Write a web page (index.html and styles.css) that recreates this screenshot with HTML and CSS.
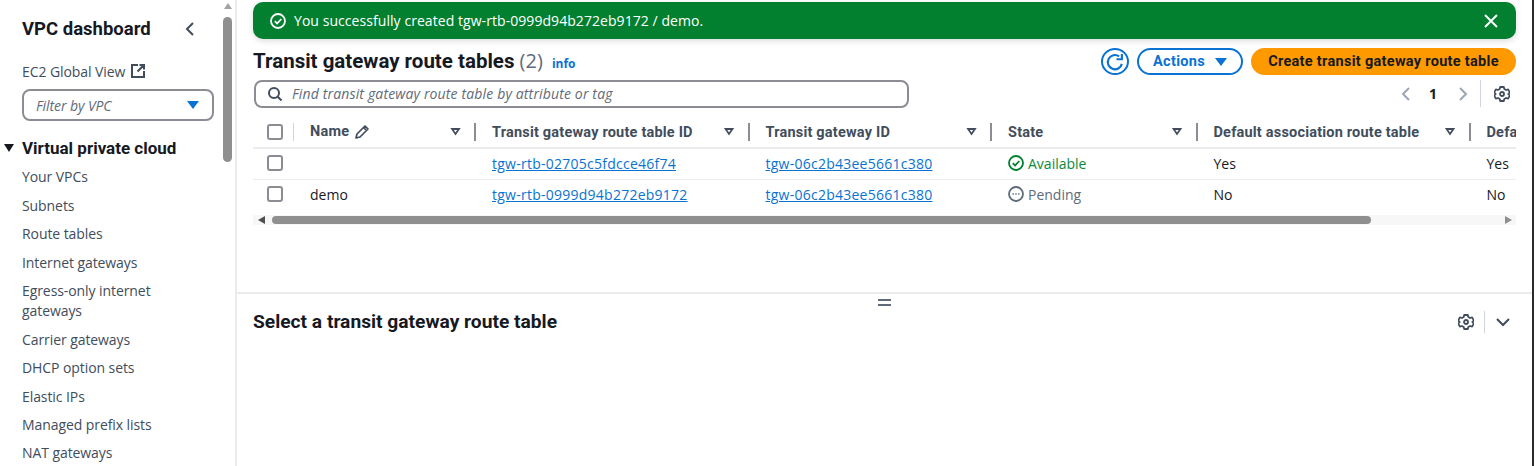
FILE: index.html
```html
<!DOCTYPE html>
<html lang="en">
<head>
<meta charset="utf-8">
<title>Transit gateway route tables</title>
<link rel="stylesheet" href="styles.css">
</head>
<body>
<div class="app">
  <aside class="sidebar">
    <nav class="nav">
      <div class="nav-head">
        <h2 class="nav-title">VPC dashboard</h2>
        <svg class="nav-close" viewBox="0 0 16 16" width="16" height="16"><path d="M11 2 5 8l6 6" fill="none" stroke="#414d5c" stroke-width="2"/></svg>
      </div>
      <a class="nav-global">EC2 Global View
        <svg viewBox="0 0 16 16" width="16" height="16"><path d="M8 2H2v12h12V8M9.500 2H14v4.500M14 2 7.500 8.500" fill="none" stroke="#414d5c" stroke-width="2"/></svg>
      </a>
      <div class="nav-filter"><span>Filter by VPC</span><i class="caret caret-blue"></i></div>
      <div class="nav-section"><i class="caret caret-dark"></i>Virtual private cloud</div>
      <ul class="nav-list">
        <li>Your VPCs</li>
        <li>Subnets</li>
        <li>Route tables</li>
        <li>Internet gateways</li>
        <li>Egress-only internet<br>gateways</li>
        <li>Carrier gateways</li>
        <li>DHCP option sets</li>
        <li>Elastic IPs</li>
        <li>Managed prefix lists</li>
        <li>NAT gateways</li>
      </ul>
    </nav>
    <div class="vscroll">
      <i class="vscroll-up"></i>
      <i class="vscroll-thumb"></i>
    </div>
  </aside>
  <main class="main">
    <section class="top">
      <div class="flash">
        <svg viewBox="0 0 16 16" width="16" height="16"><circle cx="8" cy="8" r="7" fill="none" stroke="#fff" stroke-width="1.800"/><path d="m4.800 8.200 2.300 2.300 4.200-4.500" fill="none" stroke="#fff" stroke-width="1.800"/></svg>
        <span class="flash-text">You successfully created tgw-rtb-0999d94b272eb9172 / demo.</span>
        <svg class="flash-x" viewBox="0 0 16 16" width="16" height="16"><path d="m2 2 12 12M14 2 2 14" fill="none" stroke="#fff" stroke-width="2"/></svg>
      </div>
      <div class="head">
        <h1 class="title">Transit gateway route tables <span class="count">(2)</span> <a class="info">info</a></h1>
        <div class="actions">
          <button class="btn-icon"><svg viewBox="0 0 16 16" width="20" height="20"><path d="M13.500 9.500A5.700 5.700 0 1 1 11.300 3.500" fill="none" stroke="#0972d3" stroke-width="1.700"/><path d="M13.500 1.500v4.300H9.200" fill="none" stroke="#0972d3" stroke-width="1.700"/></svg></button>
          <button class="btn-normal">Actions<i class="caret caret-blue"></i></button>
          <button class="btn-primary">Create transit gateway route table</button>
        </div>
      </div>
      <div class="tools">
        <div class="search">
          <svg viewBox="0 0 16 16" width="16" height="16"><circle cx="7" cy="7" r="5" fill="none" stroke="#414d5c" stroke-width="2"/><path d="m10.500 10.500 4 4" stroke="#414d5c" stroke-width="2"/></svg>
          <span>Find transit gateway route table by attribute or tag</span>
        </div>
        <div class="pager">
          <svg viewBox="0 0 16 16" width="16" height="16"><path d="M11 2 5 8l6 6" fill="none" stroke="#9ba7b6" stroke-width="2"/></svg>
          <b>1</b>
          <svg viewBox="0 0 16 16" width="16" height="16"><path d="m5 2 6 6-6 6" fill="none" stroke="#9ba7b6" stroke-width="2"/></svg>
          <i class="vbar"></i>
          <svg class="gear" viewBox="0 0 16 16" width="16" height="16"><path d="M6.200 1h3.600l.5 2 1.800 1 2-.6 1.700 3L14.300 8l1.500 1.600-1.700 3-2-.6-1.800 1-.5 2H6.200l-.5-2-1.800-1-2 .6-1.700-3L1.700 8 .2 6.400l1.700-3 2 .6 1.800-1z" fill="none" stroke="#414d5c" stroke-width="1.800" stroke-linejoin="round"/><circle cx="8" cy="8" r="2" fill="none" stroke="#414d5c" stroke-width="1.800"/></svg>
        </div>
      </div>
      <div class="table">
        <div class="row row-head">
          <div class="cell cell-check"><i class="check"></i><i class="sep sep-light"></i></div>
          <div class="cell cell-name"><span>Name <svg viewBox="0 0 16 16" width="16" height="16"><path d="M2 14l1-4 8-8 3 3-8 8zM9.500 3.500l3 3" fill="none" stroke="#414d5c" stroke-width="1.700" stroke-linejoin="round"/></svg></span><i class="sort"></i><i class="sep"></i></div>
          <div class="cell cell-rtb"><span>Transit gateway route table ID</span><i class="sort"></i><i class="sep"></i></div>
          <div class="cell cell-tgw"><span>Transit gateway ID</span><i class="sort"></i><i class="sep"></i></div>
          <div class="cell cell-state"><span>State</span><i class="sort"></i><i class="sep"></i></div>
          <div class="cell cell-assoc"><span>Default association route table</span><i class="sort"></i><i class="sep"></i></div>
          <div class="cell cell-last"><span>Defa</span></div>
        </div>
        <div class="row row-body">
          <div class="cell cell-check"><i class="check"></i></div>
          <div class="cell cell-name"></div>
          <div class="cell cell-rtb"><a>tgw-rtb-02705c5fdcce46f74</a></div>
          <div class="cell cell-tgw"><a>tgw-06c2b43ee5661c380</a></div>
          <div class="cell cell-state status-ok"><svg viewBox="0 0 16 16" width="16" height="16"><circle cx="8" cy="8" r="7" fill="none" stroke="#037f30" stroke-width="1.800"/><path d="m4.800 8.200 2.300 2.300 4.200-4.500" fill="none" stroke="#037f30" stroke-width="1.800"/></svg>Available</div>
          <div class="cell cell-assoc">Yes</div>
          <div class="cell cell-last">Yes</div>
        </div>
        <div class="row row-body row-last">
          <div class="cell cell-check"><i class="check"></i></div>
          <div class="cell cell-name">demo</div>
          <div class="cell cell-rtb"><a>tgw-rtb-0999d94b272eb9172</a></div>
          <div class="cell cell-tgw"><a>tgw-06c2b43ee5661c380</a></div>
          <div class="cell cell-state status-wait"><svg viewBox="0 0 16 16" width="16" height="16"><circle cx="8" cy="8" r="7" fill="none" stroke="#5f6b7a" stroke-width="1.800"/><path d="M4.500 8h1.400M7.300 8h1.400M10.100 8h1.400" stroke="#5f6b7a" stroke-width="1.600"/></svg>Pending</div>
          <div class="cell cell-assoc">No</div>
          <div class="cell cell-last">No</div>
        </div>
      </div>
      <div class="hscroll">
        <i class="hscroll-left"></i>
        <div class="hscroll-track"><i class="hscroll-thumb"></i></div>
        <i class="hscroll-right"></i>
      </div>
    </section>
    <section class="split">
      <div class="split-handle"><i></i><i></i></div>
      <div class="split-head">
        <h2 class="split-title">Select a transit gateway route table</h2>
        <div class="split-tools">
          <svg viewBox="0 0 16 16" width="16" height="16"><path d="M6.200 1h3.600l.5 2 1.800 1 2-.6 1.700 3L14.300 8l1.500 1.600-1.700 3-2-.6-1.800 1-.5 2H6.200l-.5-2-1.800-1-2 .6-1.700-3L1.700 8 .2 6.400l1.700-3 2 .6 1.800-1z" fill="none" stroke="#414d5c" stroke-width="1.800" stroke-linejoin="round"/><circle cx="8" cy="8" r="2" fill="none" stroke="#414d5c" stroke-width="1.800"/></svg>
          <i class="vbar"></i>
          <svg viewBox="0 0 16 16" width="16" height="16"><path d="m2 5 6 6 6-6" fill="none" stroke="#414d5c" stroke-width="2"/></svg>
        </div>
      </div>
    </section>
  </main>
  <div class="edge"></div>
</div>
</body>
</html>
```
FILE: styles.css
```css
* { box-sizing: border-box; }
html, body { margin: 0; height: 100%; background: #fff; overflow: hidden; }
body { font-family: "Open Sans", "Noto Sans", sans-serif; font-size: 14px; color: #16191f; }
h1, h2, ul { margin: 0; padding: 0; }
i { display: block; font-style: normal; }
svg { display: block; flex: none; }
a { color: #0972d3; }

.app { display: flex; height: 466px; }
.edge { width: 4px; flex: none; border-left: 2px solid #2b2b2b; }

.sidebar { width: 237px; flex: none; display: flex; border-right: 2px solid #e9ebed; overflow: hidden; }
.nav { flex: 1; min-width: 0; padding: 17px 9px 0 22px; color: #414d5c; letter-spacing: -.08px; }
.nav-head { display: flex; align-items: center; justify-content: space-between; height: 24px; padding-right: 15px; }
.nav-title { font-family: Roboto, sans-serif; font-size: 18.500px; font-weight: 700; color: #16191f; line-height: 24px; letter-spacing: 0; }
.nav-global { display: flex; align-items: center; gap: 5px; margin-top: 20px; height: 20px; color: #414d5c; }
.nav-filter { display: flex; align-items: center; justify-content: space-between; margin-top: 8px; height: 32px; width: 192px; padding: 0 13px 0 12px; border: 2px solid #8c8c94; border-radius: 8px; font-style: italic; color: #5f6b7a; }
.caret { width: 0; height: 0; border-left: 6px solid transparent; border-right: 6px solid transparent; border-top: 8px solid #0972d3; }
.caret-dark { position: absolute; left: 4px; border-left-width: 5.500px; border-right-width: 5.500px; border-top-color: #16191f; }
.nav-section { position: relative; margin: 17px 0 0 -22px; padding-left: 22px; display: flex; align-items: center; height: 20px; font-family: Roboto, sans-serif; font-size: 17px; font-weight: 700; color: #16191f; letter-spacing: 0; }
.nav-list { list-style: none; margin-top: 9.400px; }
.nav-list li { line-height: 20.400px; margin-bottom: 8px; white-space: nowrap; }

.vscroll { position: relative; width: 13px; flex: none; padding: 17px 3px 0 1px; background: #fff; }
.vscroll-up { position: absolute; left: 2px; top: 3px; border-left: 4.500px solid transparent; border-right: 4.500px solid transparent; border-bottom: 6px solid #a3a3a3; }
.vscroll-thumb { height: 145px; width: 9px; border-radius: 5px; background: #8f8f8f; }

.main { flex: 1; min-width: 0; display: flex; flex-direction: column; }
.top { height: 292px; padding: 2px 16px 0 16px; }
.flash { display: flex; align-items: center; gap: 8px; height: 37px; padding: 0 17px; border-radius: 10px; background: #037f30; color: #fff; box-shadow: 0 2px 6px rgba(0, 7, 22, .14); }
.flash-text { flex: 1; letter-spacing: .06px; }
.head { display: flex; align-items: center; justify-content: space-between; margin-top: 9px; height: 27px; }
.title { font-family: Roboto, sans-serif; font-size: 20.500px; font-weight: 700; line-height: 27px; white-space: nowrap; }
.count { font-family: "Open Sans", sans-serif; font-size: 20px; font-weight: 400; color: #5f6b7a; }
.info { font-family: "Open Sans", sans-serif; font-size: 12px; font-weight: 700; margin-left: 4px; }
.actions { display: flex; gap: 8px; }
button { font: inherit; font-family: Roboto, sans-serif; font-size: 14.500px; font-weight: 700; letter-spacing: .3px; height: 27px; border-radius: 14px; padding: 0; display: flex; align-items: center; justify-content: center; background: #fff; border: 2px solid #0972d3; color: #0972d3; }
.btn-icon { width: 28px; border-radius: 50%; }
.btn-normal { width: 106px; gap: 10px; }
.btn-primary { width: 265px; background: #ff9900; border-color: #ff9900; color: #16191f; }

.tools { display: flex; align-items: center; justify-content: space-between; margin-top: 5px; height: 27px; }
.search { display: flex; align-items: center; gap: 9px; width: 655px; height: 28px; margin-left: 1px; padding: 0 11px; border: 2px solid #8c8c94; border-radius: 8px; font-style: italic; color: #5f6b7a; letter-spacing: .15px; }
.pager { display: flex; align-items: center; color: #16191f; }
.pager b { width: 41px; padding-right: 3px; text-align: center; font-weight: 700; }
.vbar { width: 1px; height: 27px; background: #d1d5db; }
.pager .vbar { margin: 0 13px 0 9px; }
.gear { margin-right: 6px; }

.table { margin-top: 9px; overflow: hidden; }
.row { display: flex; height: 31px; align-items: center; border-bottom: 1px solid #e9ebed; }
.row-body .cell { padding-bottom: 2px; }
.row-head { height: 33px; font-family: Roboto, sans-serif; font-size: 14.500px; font-weight: 700; letter-spacing: .2px; color: #414d5c; border-bottom: 2px solid #e9ebed; }
.row-last { height: 30px; border-bottom: 0; }
.cell { display: flex; align-items: center; flex: none; height: 100%; padding-left: 14px; white-space: nowrap; }
.cell-check { width: 43px; }
.cell-name { width: 182px; }
.cell-rtb { width: 273.500px; }
.cell-tgw { width: 242.500px; }
.cell-state { width: 205.500px; }
.cell-assoc { width: 273px; }
.cell-last { flex: 1; min-width: 0; overflow: hidden; }
.cell-name > span { display: flex; align-items: center; gap: 5px; }
.cell > span { flex: 1; }
.row-head .cell { padding-right: 2px; }
.row-head .cell-last { padding-right: 0; }
.cell-rtb > span, .cell-tgw > span, .cell-state > span, .cell-assoc > span, .cell-last > span { padding-top: 2px; }
.check { width: 16px; height: 16px; border: 2px solid #8c8c94; border-radius: 3px; }
.sort { position: relative; width: 11px; height: 8px; margin-right: 13px; clip-path: polygon(0 0, 100% 0, 50% 100%); background: #414d5c; }
.sort::after { content: ""; position: absolute; left: 3.500px; top: 2px; width: 4px; height: 3px; clip-path: polygon(0 0, 100% 0, 50% 100%); background: #fff; }
.sep { width: 2px; height: 18px; background: #8c8c94; }
.sep-light { width: 1px; margin-left: 10px; background: #d1d5db; }
.cell a { text-decoration: underline; letter-spacing: .25px; }
.status-ok { color: #0b8a3a; gap: 4px; }
.status-wait { color: #5f6b7a; gap: 4px; }

.hscroll { display: flex; align-items: center; gap: 5px; height: 10px; margin-top: 5px; background: #f7f7f7; }
.hscroll-left { border-top: 4.500px solid transparent; border-bottom: 4.500px solid transparent; border-right: 7px solid #505050; margin-left: 5px; }
.hscroll-track { flex: 1; }
.hscroll-thumb { width: 1099px; height: 8px; margin-left: 2px; border-radius: 4px; background: #8f8f8f; }
.hscroll-right { border-top: 4.500px solid transparent; border-bottom: 4.500px solid transparent; border-left: 7px solid #8f8f8f; margin-right: 4px; }

.split { flex: 1; border-top: 2px solid #e9ebed; padding: 0 16px; }
.split-handle { display: flex; flex-direction: column; align-items: center; gap: 3px; padding-top: 5px; height: 15px; }
.split-handle i { width: 13px; height: 2px; background: #5f6b7a; }
.split-head { display: flex; align-items: center; justify-content: space-between; margin-top: 1px; height: 24px; }
.split-title { font-family: Roboto, sans-serif; font-size: 19.200px; font-weight: 700; line-height: 24px; }
.split-tools { display: flex; align-items: center; gap: 8px; padding-right: 5px; }
.split-tools .vbar { height: 22px; margin: 0 2px; }
```
